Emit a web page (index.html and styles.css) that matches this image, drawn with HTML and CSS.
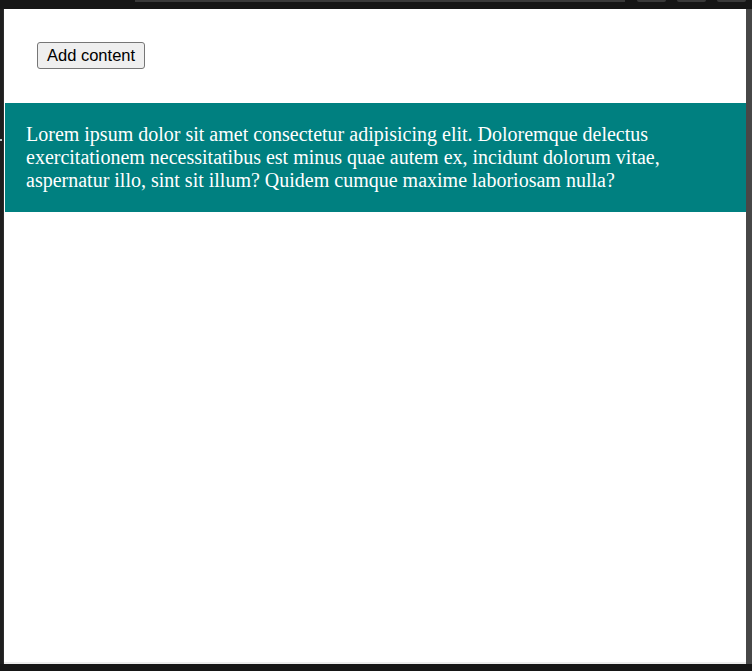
FILE: index.html
```html
<!DOCTYPE html>
<html lang="en">
<head>
<meta charset="utf-8">
<title>Add content</title>
<link rel="stylesheet" href="styles.css">
</head>
<body>
<div class="frame">
  <div class="topbar">
    <span class="seg seg-long"></span>
    <span class="seg seg-tab"></span>
    <span class="seg seg-tab"></span>
    <span class="seg seg-tab"></span>
  </div>
  <div class="middle">
    <div class="left-edge"><span class="tick"></span></div>
    <main class="page">
      <div class="toolbar">
        <button class="add-btn" type="button">Add content</button>
      </div>
      <section class="panel">
        <p class="panel-text">Lorem ipsum dolor sit amet consectetur adipisicing elit. Doloremque delectus exercitationem necessitatibus est minus quae autem ex, incidunt dolorum vitae, aspernatur illo, sint sit illum? Quidem cumque maxime laboriosam nulla?</p>
      </section>
    </main>
    <div class="right-edge"></div>
  </div>
  <div class="bottombar"></div>
</div>
</body>
</html>
```
FILE: styles.css
```css
* { box-sizing: border-box; }
html, body {
  margin: 0;
  padding: 0;
  width: 752px;
  height: 671px;
  overflow: hidden;
  background: #161616;
}
.frame {
  display: grid;
  grid-template-rows: 9px minmax(0, 1fr) 7px;
  grid-template-columns: minmax(0, 1fr);
  width: 752px;
  height: 671px;
}
.topbar {
  display: flex;
  align-items: flex-start;
  background: #161616;
  padding-left: 135px;
  overflow: hidden;
}
.seg {
  display: block;
  flex: none;
  height: 2px;
  background: #3a3a3a;
}
.seg-long { width: 490px; margin-right: 12px; }
.seg-tab { width: 29px; margin-right: 11px; border-radius: 0 0 2px 2px; }
.middle {
  display: grid;
  grid-template-columns: 4px minmax(0, 1fr) 6px;
  min-height: 0;
}
.left-edge {
  background: #1e1e1e;
  border-right: 1px solid #2c2c2c;
  display: flex;
  flex-direction: column;
  padding-top: 130px;
}
.tick {
  display: block;
  width: 2px;
  height: 2px;
  background: #bfc7c7;
}
.right-edge {
  background: #474747;
}
.page {
  background: #ffffff;
  border-bottom: 2px solid #ececec;
  display: flex;
  flex-direction: column;
  min-height: 0;
  min-width: 0;
}
.toolbar {
  padding: 33px 0 0 33px;
}
.add-btn {
  font-family: "Liberation Sans", Arial, sans-serif;
  font-size: 16.5px;
  line-height: 19px;
  color: #000;
  background: #efefef;
  border: 1px solid #767676;
  border-radius: 3px;
  padding: 3px 9px;
  height: 27px;
  margin: 0;
}
.panel {
  margin: 34px 0 0 1px;
  background: #008080;
  padding: 20px 20px 20px 21px;
}
.panel-text {
  margin: 0;
  font-family: "Liberation Serif", "Times New Roman", serif;
  font-size: 20px;
  line-height: 23px;
  color: #ffffff;
}
```
